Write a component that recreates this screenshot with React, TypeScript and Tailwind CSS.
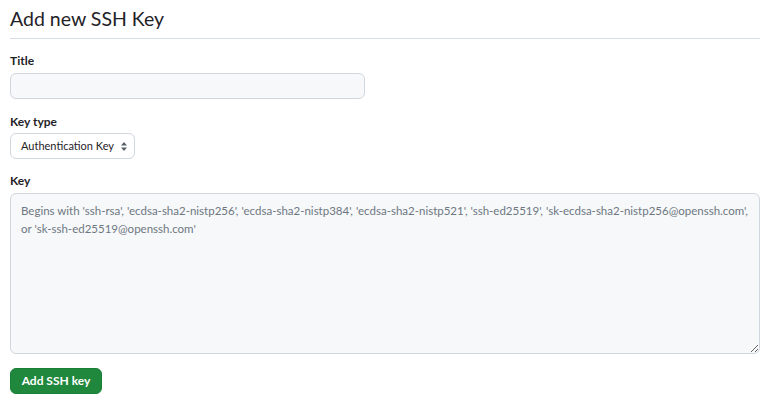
export default function App() {
  return (
    <div className="min-h-screen bg-white px-[10px] pt-[5px] text-[#1f2328] font-['Lato',sans-serif]">
      <div className="w-[750px]">
        {/* Header */}
        <div className="border-b border-[#d8dee4] pb-[5px]">
          <h1 className="text-[19.5px] leading-[28px] font-normal">Add new SSH Key</h1>
        </div>

        <form className="pt-[14px]">
          <div className="mb-[15px]">
            <label className="block text-[12px] font-bold leading-[16px] mb-[4px]">Title</label>
            <input
              type="text"
              className="block w-[355px] h-[26px] rounded-[6px] border border-[#d0d7de] bg-[#f6f8fa] px-[10px] text-[12px] outline-none"
            />
          </div>

          <div className="mb-[14px]">
            <label className="block text-[12px] font-bold leading-[16px] mb-[3px]">Key type</label>
            <div className="flex items-center justify-between w-[125px] h-[26px] rounded-[6px] border border-[#d0d7de] bg-white pl-[10px] pr-[7px] text-[11px] text-[#1f2328]">
              <span className="whitespace-nowrap">Authentication Key</span>
              <svg width="6" height="9" viewBox="0 0 6 9" className="text-[#57606a] shrink-0">
                <path d="M3 0 L6 3.5 H0 Z M3 9 L0 5.5 H6 Z" fill="currentColor" />
              </svg>
            </div>
          </div>

          <div className="mb-[13px]">
            <label className="block text-[12px] font-bold leading-[16px] mb-[4px]">Key</label>
            <textarea
              className="block w-full h-[161px] rounded-[6px] border border-[#d0d7de] bg-[#f6f8fa] px-[10px] py-[8px] text-[11.5px] leading-[18px] outline-none placeholder:text-[#6e7781]"
              placeholder="Begins with 'ssh-rsa', 'ecdsa-sha2-nistp256', 'ecdsa-sha2-nistp384', 'ecdsa-sha2-nistp521', 'ssh-ed25519', 'sk-ecdsa-sha2-nistp256@openssh.com', or 'sk-ssh-ed25519@openssh.com'"
            />
          </div>

          <button
            type="button"
            className="h-[26px] w-[92px] rounded-[6px] border border-[#1a7f37] bg-[#1f883d] text-[12px] font-bold text-white"
          >
            Add SSH key
          </button>
        </form>
      </div>
    </div>
  );
}
